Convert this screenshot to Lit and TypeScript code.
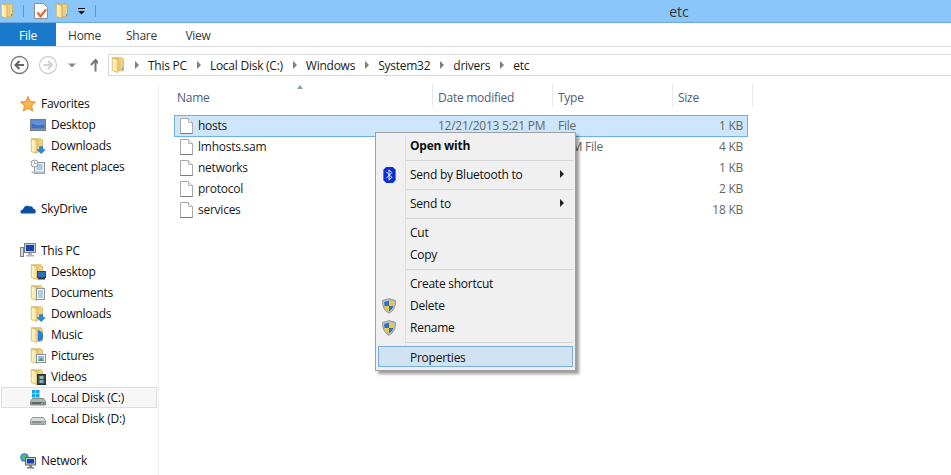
import { LitElement, html, css, svg } from "lit";
import { customElement } from "lit/decorators.js";

const folderDefs = svg`<linearGradient id="fg" x1="0" y1="0" x2="1" y2="0"><stop offset="0" stop-color="#fff8d0"/><stop offset="1" stop-color="#f3dc8e"/></linearGradient><linearGradient id="fb" x1="0" y1="0" x2="1" y2="0"><stop offset="0" stop-color="#e2bb5e"/><stop offset="1" stop-color="#f0d58a"/></linearGradient>`;
const folder = (extra: unknown = "", edge = "#cfa94e") => html`<svg class="ic" viewBox="0 0 16 16">
  <defs>${folderDefs}</defs>
  <path d="M1.500 .8h9.500l1.500 1.500v11.500H6z" fill="url(#fb)" stroke="${edge}" stroke-width=".7"/>
  <path d="M1.300 .8 7 2.600v12.800L1.300 13.600z" fill="url(#fg)" stroke="${edge}" stroke-width=".7"/>
  ${extra}
</svg>`;
const dot = svg`<rect x="11" y="11" width="1.200" height="1.600" fill="#3d8fd6"/>`;
const file = html`<svg class="fic" viewBox="0 0 13 16">
  <path d="M.5.5h8l4 4v11H.5z" fill="#fff" stroke="#a9a9a9"/>
  <path d="M8.500.5v4h4" fill="#efefef" stroke="#b5b5b5"/>
  <path d="M.5 15.500h12" stroke="#777"/>
</svg>`;
const shield = html`<svg class="sh" viewBox="0 0 14 16">
  <path d="M7 .6 13.500 2.400c.2 5.800-1.400 10-6.500 13C1.900 12.400.3 8.200.5 2.400z" fill="#b8bcc0" stroke="#8d9296" stroke-width=".8"/>
  <path d="M7 2.800 2.300 4C2.200 5.400 2.300 6.800 2.600 8H7z" fill="#2a6fc9"/>
  <path d="M7 2.800 11.700 4c.1 1.400 0 2.800-.3 4H7z" fill="#f5c92c"/>
  <path d="M2.600 8c.6 2 1.900 3.800 4.400 5.300V8z" fill="#f5c92c"/>
  <path d="M11.400 8c-.6 2-1.900 3.800-4.400 5.300V8z" fill="#2a6fc9"/>
</svg>`;

const dlArrow = svg`<path d="M9.500 8.500h3.500v3h2.500L11.200 15.800 7 11.500h2.500z" fill="#2b84d6" stroke="#1a64ac" stroke-width=".4"/>`;
const icons: Record<string, unknown> = {
  star: html`<svg class="ic" viewBox="0 0 16 16"><path d="M8 .5l2.200 5 5.300.5-4 3.600 1.200 5.400L8 12.200 3.300 15l1.200-5.400-4-3.600 5.300-.5z" fill="#fbb64a" stroke="#ef7f2a" stroke-width=".9"/></svg>`,
  desktop: html`<svg class="ic" viewBox="0 0 16 16"><rect x="0.500" y="2.500" width="15" height="11" fill="#8a97a6" stroke="#6f7c8a"/><rect x="1.500" y="3.500" width="13" height="8" fill="#3f6fc4"/><path d="M1.500 3.500h13v4c-4 1-9 1-13-1z" fill="#5e8fdc"/></svg>`,
  downloads: folder(dlArrow),
  recent: html`<svg class="ic" viewBox="0 0 16 16"><rect x="4.500" y="3.500" width="10" height="11" fill="#eef1f3" stroke="#8e9396"/><path d="M6.500 6h6M6.500 8h6M6.500 10h6" stroke="#6fa3d0"/><circle cx="4.500" cy="4.500" r="3.500" fill="#fff" stroke="#8e9396"/><path d="M4.500 2.500v2h2" fill="none" stroke="#666" stroke-width=".7"/><rect x="1.500" y="12.500" width="13" height="2" fill="#b9bdc0"/></svg>`,
  cloud: html`<svg class="ic" viewBox="0 0 16 16"><path d="M1 12.500c-1.200-2 0-4 2-4 .6-3 4-5 6.500-3 1.800-.6 3.500.4 3.800 2.200 1.800.2 2.700 1.600 2.400 3.200-.2 1-1 1.600-2 1.600z" fill="#0b4ea2"/></svg>`,
  pc: html`<svg class="ic" viewBox="0 0 16 16"><rect x="0.500" y="4.500" width="3" height="9" fill="#d7dadb" stroke="#7c8082"/><rect x="4.500" y="0.500" width="11" height="9" fill="#c9ced1" stroke="#7c8082"/><rect x="6" y="2" width="8" height="6" fill="#173fb0"/><path d="M8 10h4v2h2v1.500H6V12h2z" fill="#b2b6b8"/></svg>`,
  fdesktop: folder(svg`<rect x="7.500" y="7.500" width="8" height="6" fill="#2f6ebc" stroke="#444"/><rect x="8" y="14" width="7" height="1.500" fill="#333"/>`),
  fdocs: folder(svg`<rect x="6.500" y="3.500" width="8" height="11" fill="#f3f5f7" stroke="#8c9499"/><path d="M8 6h5M8 8h5M8 10h5M8 12h5" stroke="#7fa2c2"/>`),
  fmusic: folder(svg`<path d="M8 3c4 1 6 4 5 8-.5 2.500-3 4-5 3.500z" fill="#2b7fd0"/>`),
  fpics: folder(svg`<rect x="6.500" y="6.500" width="9" height="8" fill="#f3f5f7" stroke="#8c9499"/><rect x="8" y="8" width="6" height="5" fill="#8fc0d8"/><path d="M8 13l3-3 3 3z" fill="#5e8f6a"/>`),
  fvideos: folder(svg`<rect x="7.500" y="5.500" width="8" height="10" fill="#3e4a4c" stroke="#2b2f30"/><rect x="9.500" y="7" width="4" height="3" fill="#8fc0a8"/><rect x="9.500" y="11" width="4" height="3" fill="#7fb0c8"/>`),
  diskc: html`<svg class="ic" viewBox="0 0 16 16"><rect x="2" y="0" width="3.500" height="3.500" fill="#12a5ec"/><rect x="6" y="0" width="3.500" height="3.500" fill="#12a5ec"/><rect x="2" y="4" width="3.500" height="3.500" fill="#12a5ec"/><rect x="6" y="4" width="3.500" height="3.500" fill="#12a5ec"/><path d="M2.500 8.500h11l2 3v3.500H.5v-3.500z" fill="#aab3b5" stroke="#70787a" stroke-width=".8"/><rect x="1.500" y="12" width="13" height="2.200" fill="#5d6567"/><rect x="11" y="12.500" width="2.500" height="1.300" fill="#6cd86a"/></svg>`,
  diskd: html`<svg class="ic" viewBox="0 0 16 16"><path d="M2.500 6.500h11l2 3v4H.5v-4z" fill="#d8dcdd" stroke="#7d8385" stroke-width=".8"/><rect x="1.500" y="10" width="13" height="2.600" fill="#8b9193"/><rect x="11" y="10.500" width="2.500" height="1.600" fill="#6cd86a"/></svg>`,
  network: html`<svg class="ic" viewBox="0 0 16 16"><circle cx="4.500" cy="4.500" r="4" fill="#37a2d8" stroke="#1e6e9c" stroke-width=".6"/><path d="M2 3.500l2-2 2 1-1 2 1 2-2 1z" fill="#5dbb5a"/><rect x="5.500" y="4.500" width="10" height="7.500" fill="#c9ced1" stroke="#5d6366"/><rect x="7" y="6" width="7" height="4.500" fill="#1841b8"/><path d="M9 12h3v2h2v1.500H7V14h2z" fill="#7c8285"/></svg>`,
};

interface NavItem { label: string; icon: string; top?: boolean; sel?: boolean; }
const groups: NavItem[][] = [
  [
    { label: "Favorites", icon: "star", top: true },
    { label: "Desktop", icon: "desktop" },
    { label: "Downloads", icon: "downloads" },
    { label: "Recent places", icon: "recent" },
  ],
  [{ label: "SkyDrive", icon: "cloud", top: true }],
  [
    { label: "This PC", icon: "pc", top: true },
    { label: "Desktop", icon: "fdesktop" },
    { label: "Documents", icon: "fdocs" },
    { label: "Downloads", icon: "downloads" },
    { label: "Music", icon: "fmusic" },
    { label: "Pictures", icon: "fpics" },
    { label: "Videos", icon: "fvideos" },
    { label: "Local Disk (C:)", icon: "diskc", sel: true },
    { label: "Local Disk (D:)", icon: "diskd" },
  ],
  [{ label: "Network", icon: "network", top: true }],
];

const files = [
  { n: "hosts", d: "12/21/2013 5:21 PM", t: "File", s: "1 KB", sel: true },
  { n: "lmhosts.sam", d: "", t: "SAM File", s: "4 KB" },
  { n: "networks", d: "", t: "", s: "1 KB" },
  { n: "protocol", d: "", t: "", s: "2 KB" },
  { n: "services", d: "", t: "", s: "18 KB" },
];

const crumbs = ["This PC", "Local Disk (C:)", "Windows", "System32", "drivers", "etc"];

@customElement("app-root")
export class AppRoot extends LitElement {
  static styles = css`
    :host { display: block; width: 951px; height: 475px; overflow: hidden; position: relative; background: #fff;
      font-family: "Open Sans", "Noto Sans", sans-serif; font-size: 12px; color: #111; letter-spacing: -0.25px; }
    .ic { width: 16px; height: 16px; flex: none; display: block; }
    .fic { width: 13px; height: 16px; flex: none; display: block; }
    .sh { width: 14px; height: 16px; flex: none; display: block; }
    .title { height: 22px; background: #8bc6fa; border-bottom: 1px solid #6aa7e0; display: flex; align-items: center; position: relative; }
    .qat { display: flex; align-items: center; }
    .qat .sep { width: 1px; height: 12px; background: #6f94b5; }
    .qat .s1 { margin: 0 10px 0 7px; }
    .qat .page { width: 14px; height: 16px; display: block; }
    .qat .f2 { margin-left: 7px; }
    .qat .s2 { margin-left: 10px; }
    .qat .drop { margin-left: 7px; width: 7px; height: 8px; display: block; }
    .wname { position: absolute; left: 0; right: 0; top: 2px; text-align: center; padding-left: 407px; color: #333; font-size: 14px; letter-spacing: 0; }
    .tabs { height: 23px; display: flex; border-bottom: 1px solid #dadbdc; align-items: stretch; }
    .tab { display: flex; align-items: center; justify-content: center; color: #3b3b3b; padding-top: 2px; box-sizing: border-box; }
    .tab.file { width: 56px; background: #1979ca; color: #fff; }
    .tab.home { width: 57px; }
    .tab.share { width: 57px; }
    .tab.view { width: 56px; }
    .addr-row { height: 37px; display: flex; align-items: flex-start; padding-top: 7px; box-sizing: border-box; }
    .nav { width: 108px; height: 22px; flex: none; display: flex; align-items: center; padding-left: 10px; box-sizing: border-box; }
    .addr { flex: 1; height: 22px; border: 1px solid #d9d9d9; border-right: none; display: flex; align-items: center; padding-left: 2px; box-sizing: border-box; color: #1a1a1a; }
    .addr .fw { margin-right: -2px; }
    .crumb-sep { width: 0; height: 0; border-left: 4px solid #7f7f7f; border-top: 4px solid transparent; border-bottom: 4px solid transparent; margin: 0 9px 0 10px; }
    .main { display: flex; height: 391px; }
    .side { width: 158px; flex: none; border-right: 1px solid #f0f0f0; padding-top: 9px; }
    .group { margin-bottom: 21px; }
    .row { height: 21px; display: flex; align-items: center; gap: 5px; box-sizing: border-box; padding-left: 30px; }
    .row.top { padding-left: 20px; }
    .row.sel { background: #f7f7f7; border: 1px solid #dedede; margin-left: 1px; padding-left: 28px; margin-right: 1px; }
    .content { flex: 1; padding-left: 13px; position: relative; }
    .head { display: grid; grid-template-columns: 261px 120px 120px 80px; height: 31px; align-items: start; width: 581px; color: #4c607a; }
    .head > div { padding: 4px 0 0 5px; height: 22px; display: flex; align-items: center; border-right: 1px solid #e6eaee; box-sizing: border-box; }
    .sort { position: absolute; left: 138px; top: 1px; width: 0; height: 0; border-left: 3.5px solid transparent; border-right: 3.5px solid transparent; border-bottom: 4px solid #7ba3c9; }
    .frow { display: grid; grid-template-columns: 259px 120px 120px 1fr; height: 21px; width: 574px; align-items: center; box-sizing: border-box; border: 1px solid transparent; border-top: none; margin-left: 2px; }
    .frow.sel { background: #cde6fc; border: 1px solid #70afe3; height: 22px; }
    .frow .name { display: flex; align-items: center; gap: 5px; padding-left: 5px; color: #1a1a1a; }
    .frow .name span { padding-bottom: 2px; }
    .frow .cell { color: #666; padding: 0 0 2px 4px; }
    .frow .size { text-align: right; color: #666; padding: 0 4px 2px 0; }
    .menu { position: absolute; left: 375px; top: 132px; width: 201px; box-sizing: border-box; background: #f0f0f0; border: 1px solid #a0a0a0; box-shadow: 3px 3px 3px rgba(0,0,0,.4); padding: 2px; color: #111; }
    .menu::before { content: ""; position: absolute; left: 29px; top: 2px; bottom: 2px; width: 1px; background: #e0e0e0; }
    .mi { height: 22px; display: flex; align-items: center; position: relative; box-sizing: border-box; padding-bottom: 1px; }
    .mi .mic { width: 22px; display: flex; justify-content: center; flex: none; margin-right: 10px; }
    .mi.b { font-weight: 700; padding-bottom: 2px; }
    .mi .arr { position: absolute; right: 9px; top: 6px; width: 0; height: 0; border-left: 4px solid #222; border-top: 4px solid transparent; border-bottom: 4px solid transparent; }
    .mi.hot { background: #d1e2f2; border: 1px solid #78aee5; height: 21px; margin-bottom: 1px; padding: 1px 0 0; }
    .mi.hot .mic { margin-left: -1px; }
    .msep { height: 1px; background: #d7d7d7; margin: 3px 0 3px 28px; }
  `;

  private nav() {
    return html`
      <svg width="88" height="24" viewBox="0 0 88 24">
        <circle cx="9.500" cy="12" r="8.500" fill="#fff" stroke="#7a7a7a" stroke-width="1.300"/>
        <path d="M14 12H6M9.500 8 5.500 12l4 4" fill="none" stroke="#666" stroke-width="2"/>
        <circle cx="38" cy="12" r="8.500" fill="#fff" stroke="#d0d0d0" stroke-width="1.300"/>
        <path d="M33.500 12h8M38 8l4 4-4 4" fill="none" stroke="#d0d0d0" stroke-width="2"/>
        <path d="M58 10.500h8l-4 4z" fill="#8a8a8a"/>
        <path d="M85.500 18.500V7.500M81 12l4.500-5 4.500 5" fill="none" stroke="#777" stroke-width="2"/>
      </svg>`;
  }

  render() {
    return html`
      <div class="title">
        <div class="qat">
          ${folder(dot)}
          <div class="sep s1"></div>
          <svg class="page" viewBox="0 0 14 16"><path d="M.5.5h9l4 4v11H.5z" fill="#fff" stroke="#8d8d8d"/><path d="M3.500 9.500l3 4 5.500-7" fill="none" stroke="#e5663c" stroke-width="2.200"/></svg>
          <div class="f2">${folder(dot, "#d09a3e")}</div>
          <svg class="drop" viewBox="0 0 7 8"><rect x="0" y="1" width="7" height="1" fill="#111"/><path d="M0 4h7L3.500 7.500z" fill="#111"/></svg>
          <div class="sep s2"></div>
        </div>
        <div class="wname">etc</div>
      </div>
      <div class="tabs">
        <div class="tab file">File</div>
        <div class="tab home">Home</div>
        <div class="tab share">Share</div>
        <div class="tab view">View</div>
      </div>
      <div class="addr-row">
        <div class="nav">${this.nav()}</div>
        <div class="addr">
          <div class="fw">${folder(dot)}</div>
          ${crumbs.map((c) => html`<span class="crumb-sep"></span><span>${c}</span>`)}
        </div>
      </div>
      <div class="main">
        <div class="side">
          ${groups.map((g) => html`<div class="group">
            ${g.map((i) => html`<div class="row ${i.top ? "top" : ""} ${i.sel ? "sel" : ""}">${icons[i.icon]}<span>${i.label}</span></div>`)}
          </div>`)}
        </div>
        <div class="content">
          <div class="sort"></div>
          <div class="head"><div>Name</div><div>Date modified</div><div>Type</div><div>Size</div></div>
          <div class="rows">
            ${files.map((f) => html`<div class="frow ${f.sel ? "sel" : ""}">
              <div class="name">${file}<span>${f.n}</span></div>
              <div class="cell">${f.d}</div><div class="cell">${f.t}</div><div class="size">${f.s}</div>
            </div>`)}
          </div>
        </div>
      </div>
      <div class="menu">
        <div class="mi b"><span class="mic"></span>Open with</div>
        <div class="msep"></div>
        <div class="mi"><span class="mic"><svg width="13" height="16" viewBox="0 0 13 17"><path d="M3 0h7l3 3v11l-3 3H3l-3-3V3z" fill="#0a2fd0"/><path d="M3 5l6 6-3 3V3l3 3-6 6" fill="none" stroke="#fff" stroke-width="1"/></svg></span>Send by Bluetooth to<span class="arr"></span></div>
        <div class="msep"></div>
        <div class="mi"><span class="mic"></span>Send to<span class="arr"></span></div>
        <div class="msep"></div>
        <div class="mi"><span class="mic"></span>Cut</div>
        <div class="mi"><span class="mic"></span>Copy</div>
        <div class="msep"></div>
        <div class="mi"><span class="mic"></span>Create shortcut</div>
        <div class="mi"><span class="mic">${shield}</span>Delete</div>
        <div class="mi"><span class="mic">${shield}</span>Rename</div>
        <div class="msep"></div>
        <div class="mi hot"><span class="mic"></span>Properties</div>
      </div>
    `;
  }
}
